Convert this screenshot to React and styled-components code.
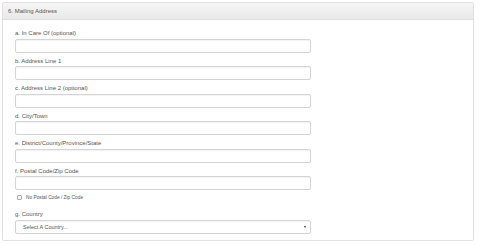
import styled, { createGlobalStyle } from 'styled-components';

const GlobalStyle = createGlobalStyle`
  html, body {
    margin: 0;
    padding: 0;
    background: #ffffff;
  }
  body {
    font-family: "Liberation Sans", Arial, Helvetica, sans-serif;
    color: #333;
  }
`;

const Panel = styled.section`
  margin: 2px 6px 0 2px;
  width: 472px;
  height: 239px;
  box-sizing: border-box;
  border: 1px solid #e0e0e0;
  border-radius: 2px;
  box-shadow: 0 1px 1px rgba(0, 0, 0, 0.05);
  display: flex;
  flex-direction: column;
`;

const PanelHeading = styled.div`
  height: 17px;
  box-sizing: border-box;
  padding: 0 5px;
  display: flex;
  align-items: center;
  font-size: 6px;
  color: #555;
  background: linear-gradient(to bottom, #f6f6f6 0%, #e9e9e9 100%);
  border-bottom: 1px solid #dedede;
`;

const PanelBody = styled.div`
  padding: 9px 12px 0 12px;
  display: flex;
  flex-direction: column;
`;

const Field = styled.div`
  display: flex;
  flex-direction: column;
  margin-bottom: ${props => props.$tight ? '2px' : '4px'};
`;

const Label = styled.label`
  font-size: 6px;
  line-height: 8px;
  color: #555;
  margin-bottom: 1.5px;
`;

const Input = styled.div`
  width: 296px;
  height: 14px;
  box-sizing: border-box;
  border: 1px solid #d4d4d4;
  border-radius: 2px;
  background: #fff;
  box-shadow: inset 0 1px 1px rgba(0, 0, 0, 0.05);
`;

const Select = styled(Input)`
  display: flex;
  align-items: center;
  justify-content: space-between;
  padding: 0 4px 0 7px;
  font-size: 5.5px;
  color: #555;
`;

const Arrow = styled.span`
  width: 0;
  height: 0;
  border-left: 1.5px solid transparent;
  border-right: 1.5px solid transparent;
  border-top: 2px solid #333;
`;

const CheckRow = styled.div`
  display: flex;
  align-items: center;
  gap: 4px;
  height: 10px;
  padding-left: 2px;
  margin-bottom: 8px;
  font-size: 4.8px;
  color: #555;
`;

const Box = styled.span`
  width: 5px;
  height: 5px;
  box-sizing: border-box;
  border: 1px solid #aaa;
  border-radius: 1px;
  background: #f4f4f4;
`;

const fields = [
  'a. In Care Of (optional)',
  'b. Address Line 1',
  'c. Address Line 2 (optional)',
  'd. City/Town',
  'e. District/County/Province/State',
  'f. Postal Code/Zip Code',
];

const App = () => {
  return (
    <>
      <GlobalStyle />
      <Panel>
        <PanelHeading>6. Mailing Address</PanelHeading>
        <PanelBody>
          {fields.map((f, i) => (
            <Field key={f} $tight={i === fields.length - 1}>
              <Label>{f}</Label>
              <Input />
            </Field>
          ))}
          <CheckRow>
            <Box />
            <span>No Postal Code / Zip Code</span>
          </CheckRow>
          <Field>
            <Label>g. Country</Label>
            <Select>
              <span>Select A Country...</span>
              <Arrow />
            </Select>
          </Field>
        </PanelBody>
      </Panel>
    </>
  );
};

export default App;
